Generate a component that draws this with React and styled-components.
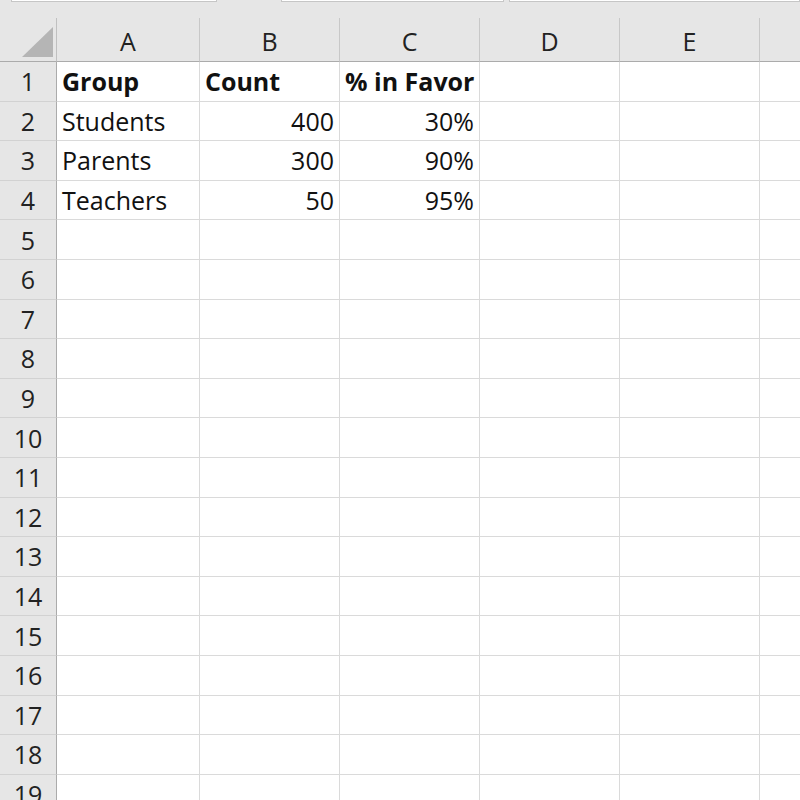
import React from 'react';
import styled, { createGlobalStyle } from 'styled-components';

const GlobalStyle = createGlobalStyle`
  html, body {
    margin: 0;
    padding: 0;
    background: #ffffff;
  }
  body {
    font-family: 'Open Sans', 'Liberation Sans', sans-serif;
    color: #111;
  }
`;

// F sits past the right edge, only its first pixels show
const COLS = ['A', 'B', 'C', 'D', 'E', 'F'];
const COL_TRACKS = '57px 143px 140px 140px 140px 140px 140px';
const ROW_COUNT = 19;

const data = [
  [{ v: 'Group', bold: true }, { v: 'Count', bold: true }, { v: '% in Favor', bold: true }],
  [{ v: 'Students' }, { v: '400', num: true }, { v: '30%', num: true }],
  [{ v: 'Parents' }, { v: '300', num: true }, { v: '90%', num: true }],
  [{ v: 'Teachers' }, { v: '50', num: true }, { v: '95%', num: true }],
];

const Window = styled.div`
  width: 800px;
  height: 800px;
  overflow: hidden;
  background: #e6e6e6;
`;

const FormulaStrip = styled.div`
  height: 18px;
  display: flex;
  align-items: flex-start;
`;

const FieldEdge = styled.div`
  height: 1px;
  margin-left: ${({ $gap }) => $gap}px;
  width: ${({ $w }) => $w}px;
  background: #ffffff;
  border: 1px solid #c6c6c6;
  border-top: none;
`;

const Grid = styled.div`
  display: grid;
  grid-template-columns: ${COL_TRACKS};
  grid-template-rows: 44px;
  grid-auto-rows: 39.6px;
  background: #ffffff;
`;

const Corner = styled.div`
  background: #e6e6e6;
  border-right: 1px solid #c0c0c0;
  border-bottom: 1px solid #ababab;
  position: relative;
  &::after {
    content: '';
    position: absolute;
    right: 3px;
    bottom: 4px;
    width: 31px;
    height: 30px;
    background: #b5b5b5;
    clip-path: polygon(100% 0, 100% 100%, 0 100%);
  }
`;

const ColHead = styled.div`
  background: #e6e6e6;
  border-right: 1px solid #c8c8c8;
  border-bottom: 1px solid #ababab;
  display: flex;
  align-items: center;
  justify-content: center;
  font-size: 25px;
  color: #222;
  padding-top: 2px;
`;

const RowHead = styled.div`
  background: #e6e6e6;
  border-right: 1px solid #ababab;
  border-bottom: 1px solid #d2d2d2;
  display: flex;
  align-items: center;
  justify-content: center;
  font-size: 25px;
  color: #222;
`;

const Cell = styled.div`
  border-right: 1px solid #dadada;
  border-bottom: 1px solid #dadada;
  display: flex;
  align-items: center;
  justify-content: ${({ $num }) => ($num ? 'flex-end' : 'flex-start')};
  padding: 0 5px;
  font-size: 25px;
  font-weight: ${({ $bold }) => ($bold ? 700 : 400)};
  color: #111;
  white-space: nowrap;
  overflow: hidden;
`;

export default function App() {
  const rows = Array.from({ length: ROW_COUNT }, (_, i) => i + 1);

  return (
    <Window>
      <GlobalStyle />
      <FormulaStrip>
        <FieldEdge $gap={11} $w={205} />
        <FieldEdge $gap={64} $w={222} />
        <FieldEdge $gap={5} $w={290} />
      </FormulaStrip>
      <Grid>
        <Corner />
        {COLS.map((c, i) => (
          <ColHead key={c}>{i < 5 ? c : ''}</ColHead>
        ))}
        {rows.map((r) => (
          <React.Fragment key={r}>
            <RowHead>{r}</RowHead>
            {COLS.map((c, ci) => {
              const cell = data[r - 1] && data[r - 1][ci];
              return (
                <Cell key={c} $num={cell && cell.num} $bold={cell && cell.bold}>
                  {cell ? cell.v : ''}
                </Cell>
              );
            })}
          </React.Fragment>
        ))}
      </Grid>
    </Window>
  );
}
